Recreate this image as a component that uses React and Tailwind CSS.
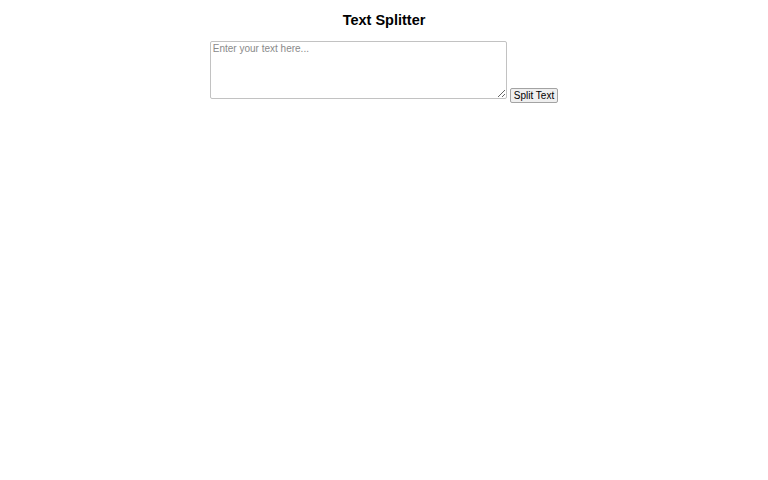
import React, { useState } from 'react';

const App = () => {
  const [text, setText] = useState('');
  const [parts, setParts] = useState([]);

  const handleSplit = () => {
    setParts(text.split(/\s+/).filter(Boolean));
  };

  return (
    <div className="min-h-[480px] bg-white text-black font-['Liberation_Sans',Arial,sans-serif]">
      <h1 className="pt-[11px] text-center text-[14.5px] leading-[18px] font-bold">Text Splitter</h1>
      <div className="mt-[12px] flex items-end justify-center gap-[3px]">
        <textarea
          value={text}
          onChange={e => setText(e.target.value)}
          placeholder="Enter your text here..."
          className="mb-[4px] h-[58px] w-[297px] rounded-[2px] border border-[#c2c2c2] px-[2px] py-[1px] text-[10px] leading-[12px] placeholder:text-[#8a8a8a] outline-none"
        />
        <button
          onClick={handleSplit}
          className="h-[15px] rounded-[2px] border border-[#a3a3a3] bg-[#efefef] px-[3px] text-[10px] leading-[12px]"
        >
          Split Text
        </button>
      </div>
      {parts.length > 0 && (
        <ul className="mt-4 text-center text-[12px]">
          {parts.map((p, i) => (
            <li key={i}>{p}</li>
          ))}
        </ul>
      )}
    </div>
  );
};

export default App;
